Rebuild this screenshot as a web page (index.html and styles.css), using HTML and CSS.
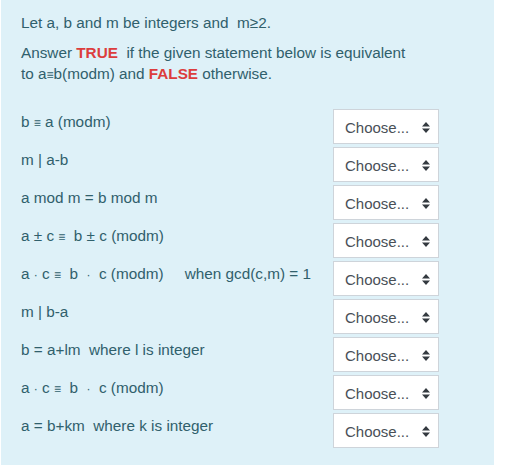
FILE: index.html
```html
<!DOCTYPE html>
<html>
<head>
<meta charset="utf-8">
<link rel="stylesheet" href="styles.css">
</head>
<body>
<div class="panel">
  <p class="intro">Let a, b and m be integers and&nbsp; m≥2.</p>
  <p class="intro second">Answer <b class="red">TRUE</b>&nbsp; if the given statement below is equivalent<br>to a<span class="eq">≡</span>b(modm) and <b class="red">FALSE</b> otherwise.</p>
  <div class="rows">
    <div class="row"><div class="label">b <span class="eq">≡</span> a (modm)</div><div class="select">Choose...<svg class="arrow" width="8" height="11" viewBox="0 0 8 11"><path d="M4 0 L8 4.5 H0 Z M4 11 L8 6.5 H0 Z" fill="#343a40"/></svg></div></div>
    <div class="row"><div class="label">m | a-b</div><div class="select">Choose...<svg class="arrow" width="8" height="11" viewBox="0 0 8 11"><path d="M4 0 L8 4.5 H0 Z M4 11 L8 6.5 H0 Z" fill="#343a40"/></svg></div></div>
    <div class="row"><div class="label">a mod m = b mod m</div><div class="select">Choose...<svg class="arrow" width="8" height="11" viewBox="0 0 8 11"><path d="M4 0 L8 4.5 H0 Z M4 11 L8 6.5 H0 Z" fill="#343a40"/></svg></div></div>
    <div class="row"><div class="label">a ± c <span class="eq">≡</span>&nbsp; b ± c (modm)</div><div class="select">Choose...<svg class="arrow" width="8" height="11" viewBox="0 0 8 11"><path d="M4 0 L8 4.5 H0 Z M4 11 L8 6.5 H0 Z" fill="#343a40"/></svg></div></div>
    <div class="row"><div class="label">a <span class="dot">·</span> c <span class="eq">≡</span>&nbsp; b &nbsp;<span class="dot">·</span>&nbsp; c (modm) &nbsp;&nbsp;&nbsp; when gcd(c,m) = 1</div><div class="select">Choose...<svg class="arrow" width="8" height="11" viewBox="0 0 8 11"><path d="M4 0 L8 4.5 H0 Z M4 11 L8 6.5 H0 Z" fill="#343a40"/></svg></div></div>
    <div class="row"><div class="label">m | b-a</div><div class="select">Choose...<svg class="arrow" width="8" height="11" viewBox="0 0 8 11"><path d="M4 0 L8 4.5 H0 Z M4 11 L8 6.5 H0 Z" fill="#343a40"/></svg></div></div>
    <div class="row"><div class="label">b = a+lm&nbsp; where l is integer</div><div class="select">Choose...<svg class="arrow" width="8" height="11" viewBox="0 0 8 11"><path d="M4 0 L8 4.5 H0 Z M4 11 L8 6.5 H0 Z" fill="#343a40"/></svg></div></div>
    <div class="row"><div class="label">a <span class="dot">·</span> c <span class="eq">≡</span>&nbsp; b &nbsp;<span class="dot">·</span>&nbsp; c (modm)</div><div class="select">Choose...<svg class="arrow" width="8" height="11" viewBox="0 0 8 11"><path d="M4 0 L8 4.5 H0 Z M4 11 L8 6.5 H0 Z" fill="#343a40"/></svg></div></div>
    <div class="row"><div class="label">a = b+km&nbsp; where k is integer</div><div class="select">Choose...<svg class="arrow" width="8" height="11" viewBox="0 0 8 11"><path d="M4 0 L8 4.5 H0 Z M4 11 L8 6.5 H0 Z" fill="#343a40"/></svg></div></div>
  </div>
</div>
</body>
</html>
```
FILE: styles.css
```css
body {
  margin: 0;
  background: #ffffff;
  font-family: "Liberation Sans", Arial, sans-serif;
}
.panel {
  margin-left: 1px;
  width: 473px;
  height: 453px;
  padding: 12px 0 0 20px;
  background: #def1f8;
  color: #30606c;
  font-size: 15.3px;
  line-height: 21px;
}
.intro {
  margin: 0 0 9px 0;
}
.second {
  margin-bottom: 0;
}
.red {
  color: #dc3d3d;
}
.eq {
  font-size: 12px;
}
.dot {
  font-size: 12px;
}
.rows {
  margin-top: 23px;
  display: flex;
  flex-direction: column;
  gap: 3px;
}
.row {
  display: flex;
  align-items: flex-start;
}
.label {
  width: 312px;
  padding-top: 2px;
  white-space: nowrap;
}
.select {
  box-sizing: border-box;
  width: 106px;
  height: 35px;
  background: #ffffff;
  border: 1px solid #ced4da;
  color: #495057;
  display: flex;
  align-items: center;
  padding: 2px 0 0 11px;
  font-size: 15px;
}
.arrow {
  margin-left: 13px;
}
```
